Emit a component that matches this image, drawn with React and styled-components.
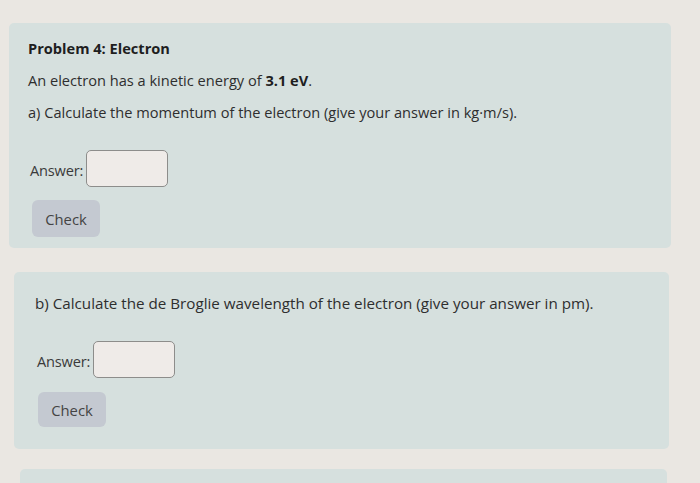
import React from 'react'
import styled, { createGlobalStyle } from 'styled-components'

const GlobalStyle = createGlobalStyle`
  html, body {
    margin: 0;
    padding: 0;
    background: #eae7e2;
    overflow: hidden;
  }
  body {
    font-family: 'Open Sans', 'Liberation Sans', sans-serif;
    color: #2a2a2a;
  }
`

const Page = styled.div`
  padding-top: 23px;
  height: 483px;
  box-sizing: border-box;
  overflow: hidden;
  display: flex;
  flex-direction: column;
`

const Card = styled.section`
  margin-left: ${(p) => p.$left}px;
  width: ${(p) => p.$width}px;
  margin-bottom: ${(p) => p.$gap}px;
  padding: ${(p) => p.$pad};
  box-sizing: border-box;
  background: #d6e0de;
  border-radius: 5px;
  flex-shrink: 0;
  font-size: ${(p) => p.$size || 14.6}px;
`

const Title = styled.h4`
  margin: 0;
  font-size: 14.6px;
  line-height: 20px;
  font-weight: 700;
  color: #1e1e1e;
`

const Text = styled.p`
  margin: 12px 0 0;
  font-size: inherit;
  line-height: 20px;
  color: #2e2e2e;

  &:first-child {
    margin-top: 0;
  }

  b {
    font-weight: 700;
    color: #1e1e1e;
  }
`

const AnswerRow = styled.div`
  display: flex;
  align-items: center;
  gap: 3px;
  margin-top: 28px;
  padding-left: ${(p) => p.$indent || 0}px;
`

const Label = styled.label`
  font-size: 14.6px;
  color: #3a3a3a;
  letter-spacing: -0.2px;
  padding-top: 3px;
`

const Input = styled.input`
  width: 82px;
  height: 37px;
  box-sizing: border-box;
  border: 1.5px solid #8d8d8b;
  border-radius: 5px;
  background: #efebe8;
  outline: none;
`

const CheckButton = styled.button`
  display: block;
  margin-top: ${(p) => p.$top}px;
  margin-left: ${(p) => p.$indent || 0}px;
  width: 68px;
  height: ${(p) => p.$height}px;
  border: none;
  border-radius: 6px;
  background: #c4c9d1;
  color: #444;
  font-family: 'Open Sans', 'Liberation Sans', sans-serif;
  font-size: 14.8px;
  cursor: pointer;
`

export default function App() {
  return (
    <>
      <GlobalStyle />
      <Page>
        <Card $left={9} $width={662} $gap={24} $pad="15px 20px 11px 19px" $size={14.6}>
          <Title>Problem 4: Electron</Title>
          <Text>
            An electron has a kinetic energy of <b>3.1 eV</b>.
          </Text>
          <Text>a) Calculate the momentum of the electron (give your answer in kg·m/s).</Text>
          <AnswerRow $indent={2}>
            <Label htmlFor="ans-a">Answer:</Label>
            <Input id="ans-a" type="text" />
          </AnswerRow>
          <CheckButton $top={13} $height={37} $indent={4}>
            Check
          </CheckButton>
        </Card>
        <Card $left={14} $width={655} $gap={20} $pad="21px 21px 22px 21px" $size={15.2}>
          <Text>b) Calculate the de Broglie wavelength of the electron (give your answer in pm).</Text>
          <AnswerRow $indent={2}>
            <Label htmlFor="ans-b">Answer:</Label>
            <Input id="ans-b" type="text" />
          </AnswerRow>
          <CheckButton $top={14} $height={35} $indent={3}>
            Check
          </CheckButton>
        </Card>
        <Card $left={20} $width={647} $gap={0} $pad="20px">
          <Text>&nbsp;</Text>
        </Card>
      </Page>
    </>
  )
}
